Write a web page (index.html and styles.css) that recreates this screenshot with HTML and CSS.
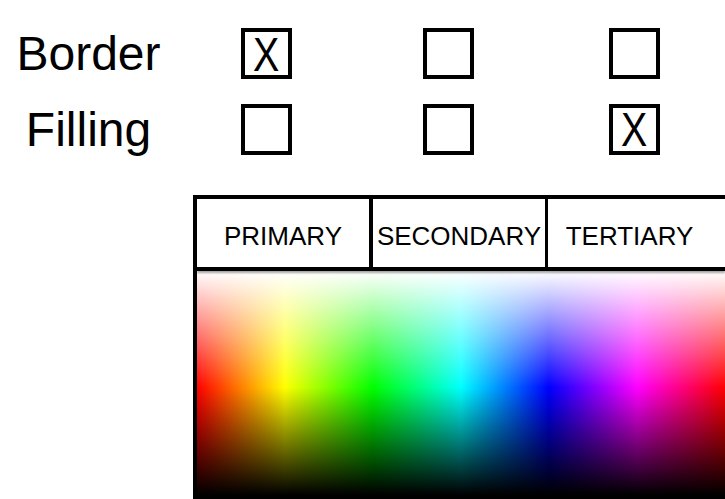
FILE: index.html
```html
<!DOCTYPE html>
<html>
<head>
<title>Colour Picker</title>
<link rel="stylesheet" href="styles.css">
</head>
<body>

<div class="options">
    <div class="label">Border</div>
    <div class="cell"><div class="check"><span>X</span></div></div>
    <div class="cell"><div class="check"></div></div>
    <div class="cell"><div class="check"></div></div>

    <div class="label">Filling</div>
    <div class="cell"><div class="check"></div></div>
    <div class="cell"><div class="check"></div></div>
    <div class="cell"><div class="check"><span>X</span></div></div>
</div>

<div class="picker">
    <div class="tabs">
        <div class="tab tab-first">PRIMARY</div>
        <div class="tab tab-second">SECONDARY</div>
        <div class="tab tab-third">TERTIARY</div>
    </div>
    <div class="spectrum"></div>
</div>

</body>
</html>
```

FILE: styles.css
```css
html, body {
    overflow: hidden;
}
body {
    font-family: 'Liberation Sans', Arial, sans-serif;
    background-color: white;
    color: black;
    margin: 0;
    padding: 0;
}
.options {
    display: grid;
    grid-template-columns: 177px 178px 187px 185px;
    grid-template-rows: 51px 52px;
    row-gap: 24px;
    align-items: center;
    padding-top: 28px;
}
.label {
    font-size: 48px;
    text-align: center;
}
.cell {
    display: flex;
    justify-content: center;
}
.check {
    box-sizing: border-box;
    width: 51px;
    height: 51px;
    border: 4px solid black;
    display: flex;
    align-items: center;
    justify-content: center;
}
.check span {
    font-size: 48px;
    line-height: 1;
    padding-top: 2px;
    transform: scaleX(0.82);
}
.picker {
    box-sizing: border-box;
    width: 536px;
    margin: 40px 0 0 193px;
    border: 4px solid black;
}
.tabs {
    display: flex;
    height: 68px;
    border-bottom: 4px solid black;
    box-shadow: 0 2px 2px rgba(0, 0, 0, 0.35);
    position: relative;
}
.tab {
    display: flex;
    align-items: center;
    justify-content: center;
    font-size: 26px;
    padding-top: 6px;
}
.tab-first {
    width: 172px;
    border-right: 4px solid black;
}
.tab-second {
    width: 172px;
    border-right: 3px solid black;
}
.tab-third {
    flex: 1;
    padding-right: 14px;
}
.spectrum {
    height: 224px;
    background:
        linear-gradient(to bottom, #fff 0%, rgba(255, 255, 255, 0) 52%, rgba(0, 0, 0, 0) 52%, #000 100%),
        linear-gradient(to right, #f00 0%, #ff0 16.67%, #0f0 33.33%, #0ff 50%, #00f 66.67%, #f0f 83.33%, #f00 100%);
}
```
